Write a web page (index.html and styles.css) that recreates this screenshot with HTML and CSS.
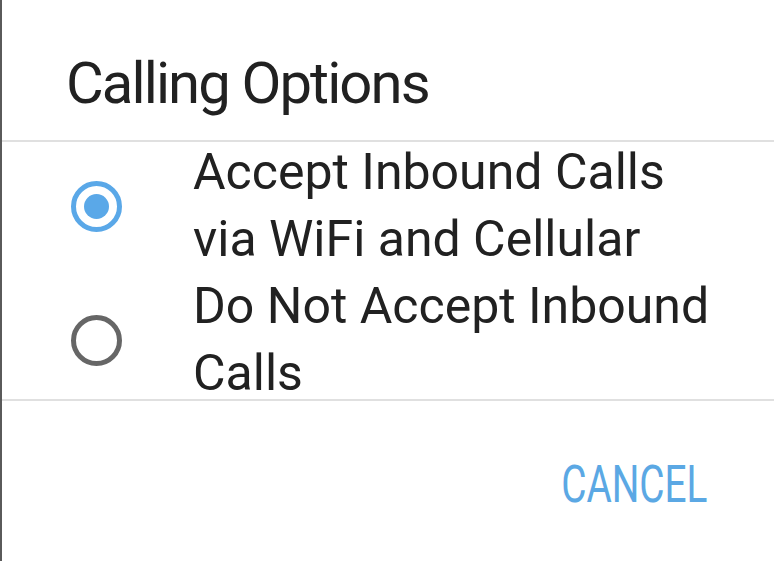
FILE: index.html
```html
<!DOCTYPE html>
<html lang="en">
<head>
    <meta charset="UTF-8">
    <meta name="viewport" content="width=device-width, initial-scale=1.0">
    <title>Calling Options</title>
    <link rel="stylesheet" href="styles.css">
</head>
<body>
    <div id="dialog">
        <h1 class="dialog-title">Calling Options</h1>
        <div class="option-list">
            <div class="option selected">
                <span class="radio"><span class="radio-dot"></span></span>
                <span class="option-label">Accept Inbound Calls via WiFi and Cellular</span>
            </div>
            <div class="option">
                <span class="radio"></span>
                <span class="option-label">Do Not Accept Inbound Calls</span>
            </div>
        </div>
        <div class="dialog-actions">
            <button class="action-button">CANCEL</button>
        </div>
    </div>
</body>
</html>
```

FILE: styles.css
```css
body {
    margin: 0;
    padding: 0;
    background: #fff;
    font-family: Roboto, 'Liberation Sans', Arial, sans-serif;
    color: #212121;
}

#dialog {
    height: 561px;
    border-left: 2px solid #5a5a5a;
    box-sizing: border-box;
    display: flex;
    flex-direction: column;
}

.dialog-title {
    margin: 0;
    padding: 49px 0 23px 64px;
    font-size: 58px;
    font-weight: 400;
    line-height: 68px;
    letter-spacing: -1.9px;
    border-bottom: 2px solid #e0e0e0;
}

.option-list {
    flex: none;
    height: 257px;
}

.option {
    display: flex;
    align-items: center;
    height: 134px;
}

.option:first-child {
    margin-top: -3px;
}

.radio {
    flex: none;
    width: 51px;
    height: 51px;
    margin-left: 69px;
    margin-right: 71px;
    border: 5px solid #666;
    border-radius: 50%;
    box-sizing: border-box;
    display: flex;
    align-items: center;
    justify-content: center;
}

.option.selected .radio {
    border-color: #5aa8e8;
}

.radio-dot {
    width: 25px;
    height: 25px;
    border-radius: 50%;
    background: #5aa8e8;
}

.option-label {
    width: 530px;
    font-size: 50px;
    line-height: 67px;
}

.dialog-actions {
    flex: 1;
    border-top: 2px solid #e0e0e0;
    display: flex;
    justify-content: flex-end;
    align-items: flex-start;
    padding: 54px 67px 0 0;
}

.action-button {
    padding: 0;
    border: none;
    background: none;
    font-family: Roboto, 'Liberation Sans', Arial, sans-serif;
    font-size: 51px;
    line-height: 60px;
    color: #5ba8e4;
    transform: scaleX(0.76);
    transform-origin: right center;
    cursor: pointer;
}
```
